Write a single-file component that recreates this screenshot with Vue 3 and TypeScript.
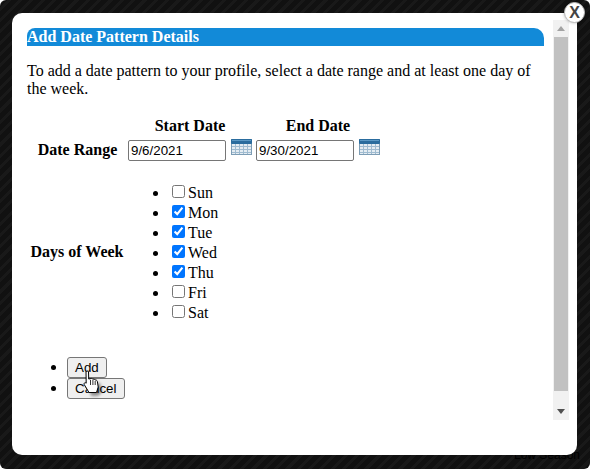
<script setup lang="ts">
interface Day { name: string; checked: boolean }
const days: Day[] = [
  { name: 'Sun', checked: false },
  { name: 'Mon', checked: true },
  { name: 'Tue', checked: true },
  { name: 'Wed', checked: true },
  { name: 'Thu', checked: true },
  { name: 'Fri', checked: false },
  { name: 'Sat', checked: false },
]
const dates = ['9/6/2021', '9/30/2021']
const gridXs = [4.5, 8.5, 12.5, 16.5]
const gridYs = [7.5, 10.5, 13.5]
</script>

<template>
  <div class="stage">
    <div class="behind">Low Season</div>
    <div class="modal">
      <div class="content">
        <h2 class="title">Add Date Pattern Details</h2>
        <p class="intro">To add a date pattern to your profile, select a date range and at least one day of the week.</p>
        <div class="range">
          <div class="label range-label">Date Range</div>
          <div class="dates">
            <div class="date-col" v-for="(d, i) in dates" :key="d">
              <div class="date-head">{{ i === 0 ? 'Start Date' : 'End Date' }}</div>
              <div class="date-row">
                <input class="date-input" type="text" :value="d" />
                <svg class="cal" width="21" height="16" viewBox="0 0 21 16">
                  <rect x="0.5" y="0.5" width="20" height="15" fill="#e4ecf2" stroke="#7d9db5" />
                  <rect x="0" y="0" width="21" height="5" rx="1" fill="#2a6c9e" />
                  <rect x="1" y="1" width="19" height="1" fill="#5b98c4" />
                  <line v-for="x in gridXs" :key="x" :x1="x" y1="5" :x2="x" y2="15" stroke="#9fbbd0" />
                  <line v-for="y in gridYs" :key="y" x1="1" :y1="y" x2="20" :y2="y" stroke="#9fbbd0" />
                </svg>
              </div>
            </div>
          </div>
        </div>
        <div class="week">
          <div class="label week-label">Days of Week</div>
          <ul class="days">
            <li v-for="d in days" :key="d.name">
              <label class="day"><input type="checkbox" :checked="d.checked" class="check" />{{ d.name }}</label>
            </li>
          </ul>
        </div>
        <ul class="actions">
          <li><button type="button" class="btn">Add</button></li>
          <li><button type="button" class="btn">Cancel</button></li>
        </ul>
        <svg class="hand" width="22" height="30" viewBox="0 0 22 30">
          <defs>
            <filter id="soft" x="-50%" y="-50%" width="200%" height="200%"><feGaussianBlur stdDeviation="1.8" /></filter>
          </defs>
          <path d="M6 15 L17 13 L19 22 L15 26 L8 26 Z" fill="#000" opacity="0.4" filter="url(#soft)" />
          <path d="M3 2 C3.3 0.6 5.2 0.6 5.5 2 L5.7 9 L8 8.6 C8.8 8.2 9.6 8.6 9.9 9.3 C10.7 8.9 11.7 9.2 12 10 C13 9.7 14.3 10.4 14.4 11.6 L15.2 17 L13.5 22.5 L6 22.5 L1.2 14.5 C0.6 13.2 2 12 3.2 13.2 Z" fill="#fff" stroke="#000" stroke-width="1" stroke-linejoin="round" />
          <path d="M7.5 10 V15 M9.9 10 V15 M12.2 11 V15" stroke="#000" stroke-width="0.8" />
        </svg>
      </div>
      <div class="scrollbar">
        <div class="arrow up"></div>
        <div class="track"><div class="thumb"></div></div>
        <div class="arrow down"></div>
      </div>
    </div>
    <button type="button" class="close">X</button>
  </div>
</template>

<style>
html, body { margin: 0; padding: 0; background: #fff; }
</style>

<style scoped>
.stage {
  position: relative;
  width: 590px;
  height: 469px;
  box-sizing: border-box;
  padding: 13px 13px 14px 12px;
  overflow: hidden;
  border-radius: 6px;
  background-color: #111;
  background-image: repeating-linear-gradient(135deg, #111 0 5px, #191919 5px 8px);
  font-family: "Liberation Serif", "Times New Roman", serif;
  font-size: 16px;
  color: #000;
}
.behind {
  position: absolute;
  left: 514px;
  top: 448px;
  font-family: "Liberation Sans", Arial, sans-serif;
  font-size: 12px;
  line-height: 15px;
  color: #000;
  white-space: nowrap;
}
.modal {
  position: relative;
  display: flex;
  align-items: flex-start;
  height: 442px;
  box-sizing: border-box;
  padding: 7px 8px 0 15px;
  background: #fff;
  border-radius: 10px;
}
.content {
  position: relative;
  width: 517px;
  margin-top: 8px;
  flex: none;
}
.title {
  margin: 0;
  height: 18px;
  line-height: 18px;
  font-size: 16px;
  font-weight: bold;
  color: #fff;
  background: #128ad8;
  border-radius: 8px 10px 0 0;
}
.intro {
  margin: 16px 0 0;
  line-height: 18px;
}
.label { font-weight: bold; text-align: center; }
.range {
  display: flex;
  align-items: center;
  margin-top: 20px;
}
.range-label {
  width: 101px;
  margin-top: 21px;
}
.dates {
  display: flex;
}
.date-head {
  font-weight: bold;
  text-align: center;
  line-height: 18px;
  padding-right: 4px;
  margin-top: -1px;
}
.date-col { display: flex; flex-direction: column; width: 128px; }
.date-row { display: flex; align-items: flex-start; margin-top: 5px; }
.date-input {
  width: 98px;
  height: 21px;
  box-sizing: border-box;
  padding: 1px 2px;
  border: 1px solid #767676;
  border-radius: 2px;
  font-family: "Liberation Sans", Arial, sans-serif;
  font-size: 13.33px;
  margin: 0;
  color: #000;
}
.cal { margin: -1px 0 0 5px; }
.week {
  display: flex;
  align-items: center;
  margin-top: 22px;
}
.week-label { width: 104px; margin-left: -2px; margin-right: -1px; margin-top: -2px; }
.days {
  margin: 0;
  padding: 0 0 0 41px;
  list-style: disc;
}
.days li { height: 20px; line-height: 20px; }
.day { padding-left: 3px; }
.check { margin: 0 3px 0 0; width: 13px; height: 13px; vertical-align: 0; }
.actions {
  margin: 34px 0 0;
  padding: 0 0 0 40px;
  list-style: disc;
}
.actions li { height: 21px; }
.btn {
  height: 21px;
  padding: 1px 7px;
  box-sizing: border-box;
  font-family: "Liberation Sans", Arial, sans-serif;
  font-size: 13.33px;
  background: #efefef;
  border: 1px solid #767676;
  border-radius: 3px;
  color: #000;
  display: block;
}
.hand { position: absolute; left: 56px; top: 342px; }
.scrollbar {
  width: 16px;
  height: 400px;
  margin-left: 9px;
  flex: none;
  background: #f1f1f1;
  display: flex;
  flex-direction: column;
}
.arrow { height: 17px; flex: none; position: relative; }
.arrow::after {
  content: "";
  position: absolute;
  left: 4px;
  border-left: 4px solid transparent;
  border-right: 4px solid transparent;
}
.up::after { top: 6px; border-bottom: 5px solid #a3a3a3; }
.down::after { top: 6px; border-top: 5px solid #505050; }
.track { flex: 1; padding: 0 1px; }
.thumb { height: 354px; background: #c1c1c1; }
.close {
  position: absolute;
  right: 5px;
  top: 2px;
  width: 21px;
  height: 21px;
  box-sizing: border-box;
  padding: 0;
  border-radius: 50%;
  border: 1px solid #bbb;
  background: #fff;
  box-shadow: 0 0 3px rgba(0, 0, 0, 0.3);
  color: #444;
  font-family: "Liberation Sans", Arial, sans-serif;
  font-weight: bold;
  font-size: 16px;
  line-height: 19px;
  text-align: center;
}
</style>
